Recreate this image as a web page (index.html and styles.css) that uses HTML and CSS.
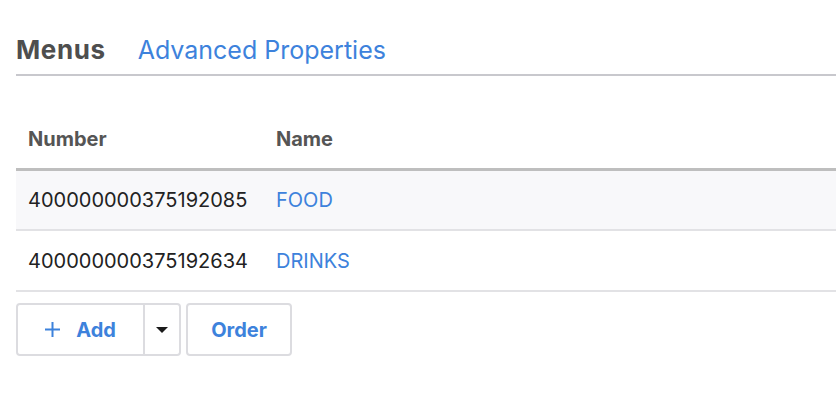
FILE: index.html
```html
<!DOCTYPE html>
<html lang="en">
<head>
  <meta charset="UTF-8">
  <meta name="viewport" content="width=device-width, initial-scale=1.0">
  <title>Menus</title>
  <link rel="stylesheet" href="styles.css">
</head>
<body>
  <div class="page">
    <div class="tabs">
      <span class="tab active">Menus</span>
      <a class="tab" href="#">Advanced Properties</a>
    </div>

    <table class="menu-table">
      <thead>
        <tr>
          <th class="col-number">Number</th>
          <th>Name</th>
        </tr>
      </thead>
      <tbody>
        <tr class="striped">
          <td>400000000375192085</td>
          <td><a href="#">FOOD</a></td>
        </tr>
        <tr>
          <td>400000000375192634</td>
          <td><a href="#">DRINKS</a></td>
        </tr>
      </tbody>
    </table>

    <div class="actions">
      <div class="split-btn">
        <button class="btn btn-add">
          <svg width="15" height="15" viewBox="0 0 15 15" aria-hidden="true">
            <path d="M7.5 0v15M0 7.5h15" stroke="currentColor" stroke-width="2" fill="none"/>
          </svg>
          Add
        </button>
        <button class="btn btn-caret" aria-label="More">
          <span class="caret"></span>
        </button>
      </div>
      <button class="btn btn-order">Order</button>
    </div>
  </div>
</body>
</html>
```

FILE: styles.css
```css
* {
  margin: 0;
  padding: 0;
  box-sizing: border-box;
}

body {
  font-family: 'Inter', 'Noto Sans', sans-serif;
  background: #fff;
  color: #222;
}

.page {
  padding: 32px 0 0 16px;
}

/* Tabs */
.tabs {
  display: flex;
  align-items: baseline;
  gap: 32px;
  border-bottom: 2px solid #c8c8cd;
  padding-bottom: 6px;
}

.tab {
  font-size: 25px;
  line-height: 35px;
  color: #3d82dc;
  text-decoration: none;
}

.tab.active {
  font-weight: 700;
  font-size: 26px;
  letter-spacing: 0.6px;
  color: #4e4e4e;
}

/* Table */
.menu-table {
  width: 100%;
  margin-top: 35px;
  border-collapse: collapse;
  font-size: 20px;
}

.menu-table th {
  text-align: left;
  font-weight: 700;
  color: #555;
  padding: 0 12px;
  height: 58px;
  vertical-align: middle;
  border-bottom: 3px solid #bebebe;
}

.menu-table th.col-number {
  width: 248px;
}

.menu-table td {
  padding: 0 12px;
  height: 61px;
  vertical-align: middle;
  border-bottom: 2px solid #e2e2e5;
  color: #222;
}

.menu-table tr.striped td {
  background: #f8f8fa;
}

.menu-table td a {
  color: #3d82dc;
  text-decoration: none;
}

/* Buttons */
.actions {
  display: flex;
  gap: 5px;
  margin-top: 11px;
}

.split-btn {
  display: flex;
  border: 2px solid #dcdce0;
  border-radius: 4px;
}

.btn {
  font-family: inherit;
  font-size: 20px;
  font-weight: 700;
  color: #3d82dc;
  background: #fff;
  border: none;
  height: 49px;
  cursor: pointer;
  display: flex;
  align-items: center;
  justify-content: center;
}

.btn-add {
  width: 125px;
  gap: 16px;
  border-radius: 4px 0 0 4px;
}

.btn-caret {
  width: 36px;
  border-left: 2px solid #dcdce0;
  border-radius: 0 4px 4px 0;
}

.caret {
  width: 0;
  height: 0;
  border-left: 6px solid transparent;
  border-right: 6px solid transparent;
  border-top: 6px solid #1a1a1a;
}

.btn-order {
  width: 106px;
  height: 53px;
  border: 2px solid #dcdce0;
  border-radius: 4px;
}
```
